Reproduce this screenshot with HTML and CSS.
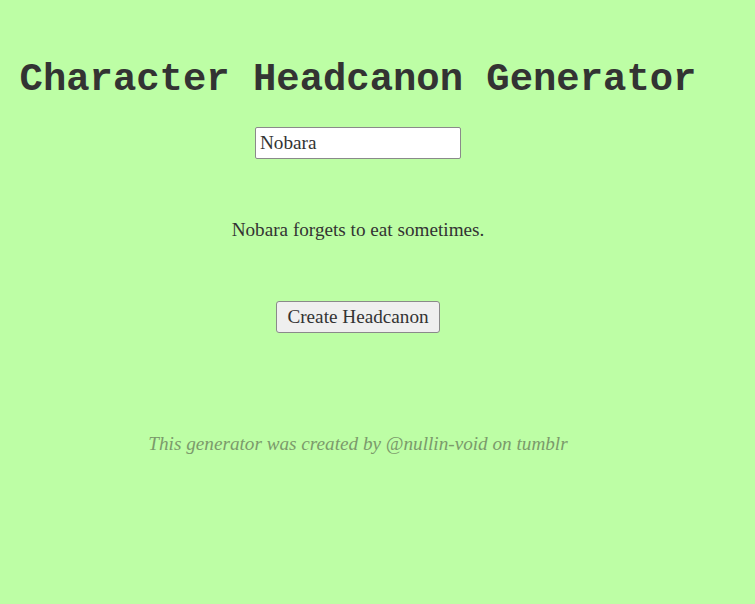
FILE: index.html
```html
<!DOCTYPE html>
<html lang="en">
<head>
    <meta charset="UTF-8">
    <meta name="viewport" content="width=device-width, initial-scale=1.0">
    <title>Character Headcanon Generator</title>
    <link rel="stylesheet" href="styles.css">
</head>
<body>
    <div class="generator">
        <h1 class="title">Character Headcanon Generator</h1>
        <input type="text" class="name-input" value="Nobara">
        <p class="headcanon">Nobara forgets to eat sometimes.</p>
        <button class="create-btn">Create Headcanon</button>
        <p class="credit">This generator was created by @nullin-void on tumblr</p>
    </div>
</body>
</html>
```

FILE: styles.css
```css
body{
    margin: 0;
    background: #bdfea5;
    color: #333333;
    font-family: "Liberation Serif", serif;
    font-size: 19.2px;
}
.generator{
    display: flex;
    flex-direction: column;
    align-items: center;
    padding: 58px 39px 0 0;
}
.title{
    margin: 0;
    font-family: "Liberation Mono", monospace;
    font-size: 38.9px;
    font-weight: bold;
    color: #333333;
}
.name-input{
    margin-top: 25px;
    width: 206px;
    height: 32px;
    box-sizing: border-box;
    padding: 1px 4px;
    font-family: "Liberation Serif", serif;
    font-size: 19.2px;
    color: #333333;
    background: #ffffff;
    border: 1px solid #8a8a8a;
    border-radius: 2px;
}
.headcanon{
    margin: 60px 0 0;
}
.create-btn{
    margin-top: 60px;
    height: 32px;
    padding: 0 10px;
    font-family: "Liberation Serif", serif;
    font-size: 19.2px;
    color: #333333;
    background: #efefef;
    border: 1px solid #8a8a8a;
    border-radius: 3px;
}
.credit{
    margin: 100px 0 0;
    font-style: italic;
    color: #7b9a6b;
}
```
